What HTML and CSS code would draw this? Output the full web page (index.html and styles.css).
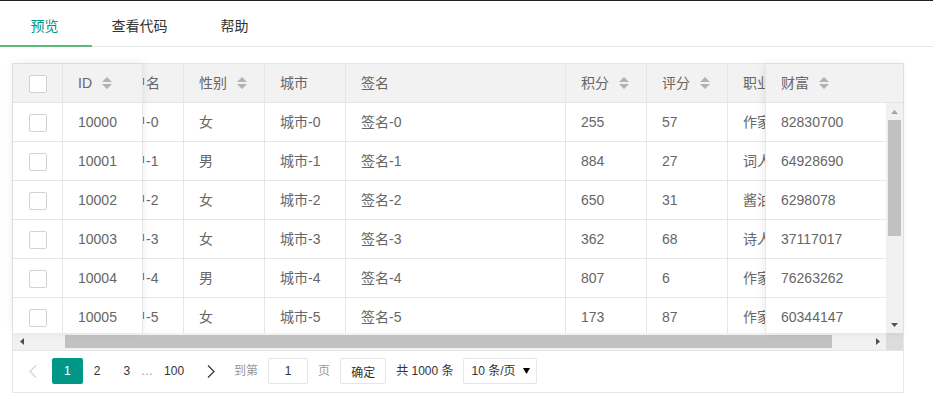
FILE: index.html
```html
<!DOCTYPE html>
<html lang="zh-CN">
<head>
    <meta charset="UTF-8">
    <meta name="viewport" content="width=device-width, initial-scale=1.0">
    <title>表格</title>
    <link rel="stylesheet" href="styles.css">
</head>
<body>
    <div class="topline"></div>
    <div class="tab">
        <ul class="tab-title">
            <li class="this">预览</li>
            <li>查看代码</li>
            <li>帮助</li>
        </ul>
    </div>

    <div class="tbl-view">
        <div class="tbl-box">
            <!-- main header -->
            <div class="tbl-header js-scroll">
                <table class="tbl tbl-main">
                    <colgroup>
                        <col class="c-cb"><col class="c-id"><col class="c-81"><col class="c-81"><col class="c-81">
                        <col class="c-sign"><col class="c-81"><col class="c-81"><col class="c-81"><col class="c-wealth">
                    </colgroup>
                    <tr>
                        <th class="cb-cell"><span class="cb"></span></th>
                        <th>ID<svg class="sort" width="10" height="12" viewBox="0 0 10 12"><path d="M0 5L5 0L10 5Z M0 7L10 7L5 12Z"/></svg></th>
                        <th>用户名</th>
                        <th>性别<svg class="sort" width="10" height="12" viewBox="0 0 10 12"><path d="M0 5L5 0L10 5Z M0 7L10 7L5 12Z"/></svg></th>
                        <th>城市</th>
                        <th>签名</th>
                        <th>积分<svg class="sort" width="10" height="12" viewBox="0 0 10 12"><path d="M0 5L5 0L10 5Z M0 7L10 7L5 12Z"/></svg></th>
                        <th>评分<svg class="sort" width="10" height="12" viewBox="0 0 10 12"><path d="M0 5L5 0L10 5Z M0 7L10 7L5 12Z"/></svg></th>
                        <th>职业</th>
                        <th>财富<svg class="sort" width="10" height="12" viewBox="0 0 10 12"><path d="M0 5L5 0L10 5Z M0 7L10 7L5 12Z"/></svg></th>
                    </tr>
                </table>
            </div>

            <!-- main body with scrollbars -->
            <div class="tbl-body">
                <div class="tbl-scroll">
                    <div class="tbl-viewport js-scroll">
                        <table class="tbl tbl-main">
                            <colgroup>
                                <col class="c-cb"><col class="c-id"><col class="c-81"><col class="c-81"><col class="c-81">
                                <col class="c-sign"><col class="c-81"><col class="c-81"><col class="c-81"><col class="c-wealth">
                            </colgroup>
                            <tr><td class="cb-cell"><span class="cb"></span></td><td>10000</td><td>用户-0</td><td>女</td><td>城市-0</td><td>签名-0</td><td>255</td><td>57</td><td>作家</td><td>82830700</td></tr>
                            <tr><td class="cb-cell"><span class="cb"></span></td><td>10001</td><td>用户-1</td><td>男</td><td>城市-1</td><td>签名-1</td><td>884</td><td>27</td><td>词人</td><td>64928690</td></tr>
                            <tr><td class="cb-cell"><span class="cb"></span></td><td>10002</td><td>用户-2</td><td>女</td><td>城市-2</td><td>签名-2</td><td>650</td><td>31</td><td>酱油</td><td>6298078</td></tr>
                            <tr><td class="cb-cell"><span class="cb"></span></td><td>10003</td><td>用户-3</td><td>女</td><td>城市-3</td><td>签名-3</td><td>362</td><td>68</td><td>诗人</td><td>37117017</td></tr>
                            <tr><td class="cb-cell"><span class="cb"></span></td><td>10004</td><td>用户-4</td><td>男</td><td>城市-4</td><td>签名-4</td><td>807</td><td>6</td><td>作家</td><td>76263262</td></tr>
                            <tr><td class="cb-cell"><span class="cb"></span></td><td>10005</td><td>用户-5</td><td>女</td><td>城市-5</td><td>签名-5</td><td>173</td><td>87</td><td>作家</td><td>60344147</td></tr>
                            <tr><td class="cb-cell"><span class="cb"></span></td><td>10006</td><td>用户-6</td><td>女</td><td>城市-6</td><td>签名-6</td><td>982</td><td>34</td><td>作家</td><td>57768166</td></tr>
                        </table>
                    </div>
                    <div class="vbar">
                        <div class="sb-btn"><svg width="7" height="4" viewBox="0 0 7 4"><path d="M0 4L3.5 0L7 4Z" fill="#a3a3a3"/></svg></div>
                        <div class="vbar-track"><div class="vbar-thumb"></div></div>
                        <div class="sb-btn"><svg width="7" height="4" viewBox="0 0 7 4"><path d="M0 0L7 0L3.5 4Z" fill="#505050"/></svg></div>
                    </div>
                </div>
                <div class="hbar-row">
                    <div class="hbar">
                        <div class="sb-btn"><svg width="4" height="7" viewBox="0 0 4 7"><path d="M4 0L4 7L0 3.5Z" fill="#505050"/></svg></div>
                        <div class="hbar-track"><div class="hbar-thumb"></div></div>
                        <div class="sb-btn"><svg width="4" height="7" viewBox="0 0 4 7"><path d="M0 0L4 3.5L0 7Z" fill="#505050"/></svg></div>
                    </div>
                    <div class="sb-corner"></div>
                </div>
            </div>

            <!-- fixed left -->
            <div class="fixed-l">
                <table class="tbl tbl-fl head">
                    <colgroup><col class="c-cb"><col class="c-id"></colgroup>
                    <tr>
                        <th class="cb-cell"><span class="cb"></span></th>
                        <th>ID<svg class="sort" width="10" height="12" viewBox="0 0 10 12"><path d="M0 5L5 0L10 5Z M0 7L10 7L5 12Z"/></svg></th>
                    </tr>
                </table>
                <div class="fixed-body">
                    <table class="tbl tbl-fl">
                        <colgroup><col class="c-cb"><col class="c-id"></colgroup>
                        <tr><td class="cb-cell"><span class="cb"></span></td><td>10000</td></tr>
                        <tr><td class="cb-cell"><span class="cb"></span></td><td>10001</td></tr>
                        <tr><td class="cb-cell"><span class="cb"></span></td><td>10002</td></tr>
                        <tr><td class="cb-cell"><span class="cb"></span></td><td>10003</td></tr>
                        <tr><td class="cb-cell"><span class="cb"></span></td><td>10004</td></tr>
                        <tr><td class="cb-cell"><span class="cb"></span></td><td>10005</td></tr>
                        <tr><td class="cb-cell"><span class="cb"></span></td><td>10006</td></tr>
                    </table>
                </div>
            </div>

            <!-- fixed right -->
            <div class="fixed-r">
                <table class="tbl tbl-fr-head">
                    <tr><th>财富<svg class="sort" width="10" height="12" viewBox="0 0 10 12"><path d="M0 5L5 0L10 5Z M0 7L10 7L5 12Z"/></svg></th></tr>
                </table>
                <div class="fixed-body">
                    <table class="tbl tbl-fr">
                        <tr><td>82830700</td></tr>
                        <tr><td>64928690</td></tr>
                        <tr><td>6298078</td></tr>
                        <tr><td>37117017</td></tr>
                        <tr><td>76263262</td></tr>
                        <tr><td>60344147</td></tr>
                        <tr><td>57768166</td></tr>
                    </table>
                </div>
            </div>
        </div>

        <div class="tbl-page">
            <a class="pg-prev"><svg width="8" height="13" viewBox="0 0 8 13"><path d="M7 0.5L1 6.5L7 12.5" fill="none" stroke="#d2d2d2" stroke-width="1.2"/></svg></a>
            <span class="pg pg-curr">1</span>
            <a class="pg">2</a>
            <a class="pg">3</a>
            <span class="pg-spr">…</span>
            <a class="pg">100</a>
            <a class="pg pg-next"><svg width="8" height="13" viewBox="0 0 8 13"><path d="M1 0.5L7 6.5L1 12.5" fill="none" stroke="#333" stroke-width="1.2"/></svg></a>
            <span class="pg-skip">到第<input class="pg-input" value="1">页<button class="pg-btn">确定</button></span>
            <span class="pg-count">共 1000 条</span>
            <span class="pg-limit">10 条/页<svg width="7" height="6" viewBox="0 0 7 6"><path d="M0 0L7 0L3.5 6Z" fill="#000"/></svg></span>
        </div>
    </div>

    <script>
    document.querySelectorAll('.js-scroll').forEach(function (el) {
        el.scrollLeft = 40;
    });
    </script>
</body>
</html>
```

FILE: styles.css
```css
* {margin: 0; padding: 0; box-sizing: border-box;}
body {font: 14px/1.5 "Liberation Sans", "Noto Sans CJK SC", sans-serif; color: #333; background: #fff;}
ul {list-style: none;}
a {color: #333; text-decoration: none;}

.topline {height: 1px; background: #222;}

/* tabs */
.tab {margin-top: 5px;}
.tab-title {display: flex; height: 41px; margin-left: -3px; border-bottom: 1px solid #e6e6e6;}
.tab-title li {position: relative; min-width: 95px; padding: 0 15px; line-height: 40px; text-align: center; color: #333;}
.tab-title li.this {color: #009688;}
.tab-title li.this:after {content: ""; position: absolute; left: 0; right: 0; bottom: -1px; height: 2px; background: #5FB878;}

/* table */
.tbl-view {width: 892px; margin: 16px 0 0 12px; border: 1px solid #e6e6e6;}
.tbl-box {position: relative;}

.tbl {border-collapse: separate; border-spacing: 0; table-layout: fixed; color: #666;}
.tbl-main {width: 957px;}
.tbl tr {height: 39px;}
.tbl th, .tbl td {padding: 0 15px; font-weight: normal; text-align: left; white-space: nowrap; overflow: hidden;
    border-right: 1px solid #e6e6e6; border-bottom: 1px solid #e6e6e6; line-height: 20px; background: #fff;}
.tbl th {background: #f2f2f2;}

.c-cb {width: 50px;}
.c-id {width: 80px;}
.c-81 {width: 81px;}
.c-sign {width: 220px;}
.c-wealth {width: 121px;}

.cb-cell {text-align: center !important; padding: 0 !important;}
.cb {display: inline-block; width: 18px; height: 18px; border: 1px solid #d2d2d2; border-radius: 2px; background: #fff; vertical-align: middle;}

.sort {margin-left: 10px; vertical-align: -1px; fill: #b2b2b2;}

.tbl-header {width: 890px; overflow: hidden;}

.tbl-scroll {display: flex;}
.tbl-viewport {width: 873px; height: 230px; overflow: hidden;}

/* scrollbars */
.vbar {display: flex; flex-direction: column; width: 17px; height: 230px; background: #f1f1f1;}
.sb-btn {display: flex; align-items: center; justify-content: center; width: 17px; height: 17px; flex: none;}
.vbar-track {flex: 1; padding: 0 2px;}
.vbar-thumb {height: 116px; background: #c1c1c1;}

.hbar-row {display: flex; height: 17px;}
.hbar {display: flex; width: 873px; background: #f1f1f1;}
.hbar-track {flex: 1; display: flex; align-items: center; padding-left: 35px;}
.hbar-thumb {width: 767px; height: 13px; background: #c1c1c1;}
.sb-corner {width: 17px; background: #dcdcdc;}

/* fixed columns */
.fixed-l {position: absolute; left: 0; top: 0; z-index: 2; width: 130px; box-shadow: 0 -1px 8px rgba(0, 0, 0, .08);}
.tbl-fl {width: 130px;}
.fixed-body {height: 230px; overflow: hidden;}

.fixed-r {position: absolute; right: 0; top: 0; z-index: 2; width: 138px; border-left: 1px solid #e6e6e6; box-shadow: -1px 0 8px rgba(0, 0, 0, .08);}
.tbl-fr-head {width: 137px;}
.tbl-fr-head th {border-right: 0;}
.fixed-r .fixed-body {width: 120px;}
.tbl-fr {width: 120px;}
.tbl-fr td {border-right: 0;}

/* pagination */
.tbl-page {display: flex; align-items: flex-start; height: 42px; padding: 7px 0 0 7px; border-top: 1px solid #e6e6e6; font-size: 12px; line-height: 26px;}
.pg-prev {display: flex; align-items: center; width: 32px; height: 26px; padding-left: 9px;}
.pg {display: block; height: 26px; padding: 0 12px; margin-right: -1px; color: #333;}
.pg-curr {background: #009688; color: #fff; border-radius: 2px;}
.pg-next {display: flex; align-items: center;}
.pg-spr {margin-right: -1px; color: #999;}
.pg-skip {display: flex; margin-left: 8px; color: #999;}
.pg-input {width: 40px; height: 26px; margin: 0 10px; border: 1px solid #e6e6e6; border-radius: 2px; text-align: center;
    font: 12px "Liberation Sans", "Noto Sans CJK SC", sans-serif; color: #333; outline: none;}
.pg-btn {height: 26px; margin-left: 10px; padding: 0 10px; border: 1px solid #e6e6e6; border-radius: 2px; background: #fff;
    font: 12px "Liberation Sans", "Noto Sans CJK SC", sans-serif; color: #333;}
.pg-count {margin-left: 10px; color: #333;}
.pg-limit {display: flex; align-items: center; justify-content: space-between; width: 74px; height: 26px; margin-left: 9px;
    padding: 0 6px 0 8px; border: 1px solid #e6e6e6; border-radius: 2px; color: #333;}
```
